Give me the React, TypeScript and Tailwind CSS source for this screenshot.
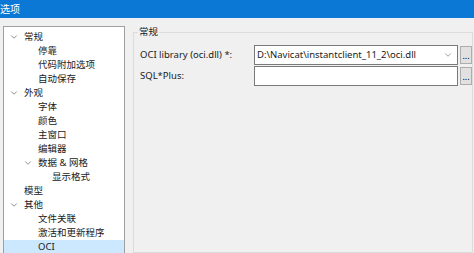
import React from "react";
import { ChevronDown } from "lucide-react";

type Node = { label: string; level: number; open?: boolean; selected?: boolean };

const tree: Node[] = [
  { label: "常规", level: 0, open: true },
  { label: "停靠", level: 1 },
  { label: "代码附加选项", level: 1 },
  { label: "自动保存", level: 1 },
  { label: "外观", level: 0, open: true },
  { label: "字体", level: 1 },
  { label: "颜色", level: 1 },
  { label: "主窗口", level: 1 },
  { label: "编辑器", level: 1 },
  { label: "数据 & 网格", level: 1, open: true },
  { label: "显示格式", level: 2 },
  { label: "模型", level: 0 },
  { label: "其他", level: 0, open: true },
  { label: "文件关联", level: 1 },
  { label: "激活和更新程序", level: 1 },
  { label: "OCI", level: 1, selected: true },
];

const indent = ["pl-[20px]", "pl-[34px]", "pl-[48px]"];

function TreeRow({ node }: { node: Node }) {
  return (
    <div
      className={`relative h-[14px] flex items-center ${indent[node.level]} ${
        node.selected ? "bg-[#cce8ff]" : ""
      }`}
    >
      {node.open && (
        <ChevronDown
          className={`absolute w-[10px] h-[10px] text-[#666] ${
            node.level === 0 ? "left-[5px]" : "left-[19px]"
          }`}
          strokeWidth={1.75}
        />
      )}
      <span className="text-[9.5px] leading-none text-[#1a1a1a] whitespace-nowrap">{node.label}</span>
    </div>
  );
}

export default function App() {
  return (
    <div className="w-[474px] h-[253px] overflow-hidden bg-[#f0f0f0] flex flex-col font-['Segoe_UI','Noto_Sans','Noto_Sans_CJK_SC',sans-serif]">
      {/* title bar */}
      <div className="h-[18px] bg-[#0a78d4] flex items-center text-white text-[10px] shrink-0">
        选项
      </div>

      <div className="flex flex-1 pt-[8px] min-h-0">
        {/* options tree */}
        <div className="ml-[3px] w-[122px] h-[240px] shrink-0 bg-white border border-[#a0a0a0] pt-[3px]">
          {tree.map((n) => (
            <TreeRow key={n.label} node={n} />
          ))}
        </div>

        {/* right panel */}
        <div className="flex-1 ml-[8px] mr-[1px] flex flex-col">
          <div className="relative mt-[6px] border border-[#dcdcdc] h-[240px] pt-[10px] pl-[6px]">
            <span className="absolute -top-[6px] left-[4px] bg-[#f0f0f0] px-[1px] text-[9.5px] leading-none text-[#1a1a1a]">
              常规
            </span>
            <div className="flex items-center h-[20px] mt-[2px]">
              <span className="w-[114px] text-[9.5px] text-[#1a1a1a] whitespace-nowrap">OCI library (oci.dll) *:</span>
              <div className="flex-1 h-[20px] bg-white border border-[#7a7a7a] flex items-center pl-[2px] pr-[4px]">
                <span className="flex-1 text-[9.5px] text-[#1a1a1a] whitespace-nowrap overflow-hidden">
                  D:\Navicat\instantclient_11_2\oci.dll
                </span>
                <ChevronDown className="w-[10px] h-[10px] text-[#666]" strokeWidth={1.5} />
              </div>
              <div className="w-[12px] h-[18px] ml-[2px] bg-[#e1e1e1] border border-[#adadad] text-[9px] leading-none flex items-center justify-center overflow-hidden">
                ...
              </div>
            </div>
            <div className="flex items-center h-[20px] mt-[1px]">
              <span className="w-[114px] text-[9.5px] text-[#1a1a1a] whitespace-nowrap">SQL*Plus:</span>
              <div className="flex-1 h-[20px] bg-white border border-[#7a7a7a]" />
              <div className="w-[12px] h-[18px] ml-[2px] bg-[#e1e1e1] border border-[#adadad] text-[9px] leading-none flex items-center justify-center overflow-hidden">
                ...
              </div>
            </div>
          </div>
        </div>
      </div>
    </div>
  );
}
